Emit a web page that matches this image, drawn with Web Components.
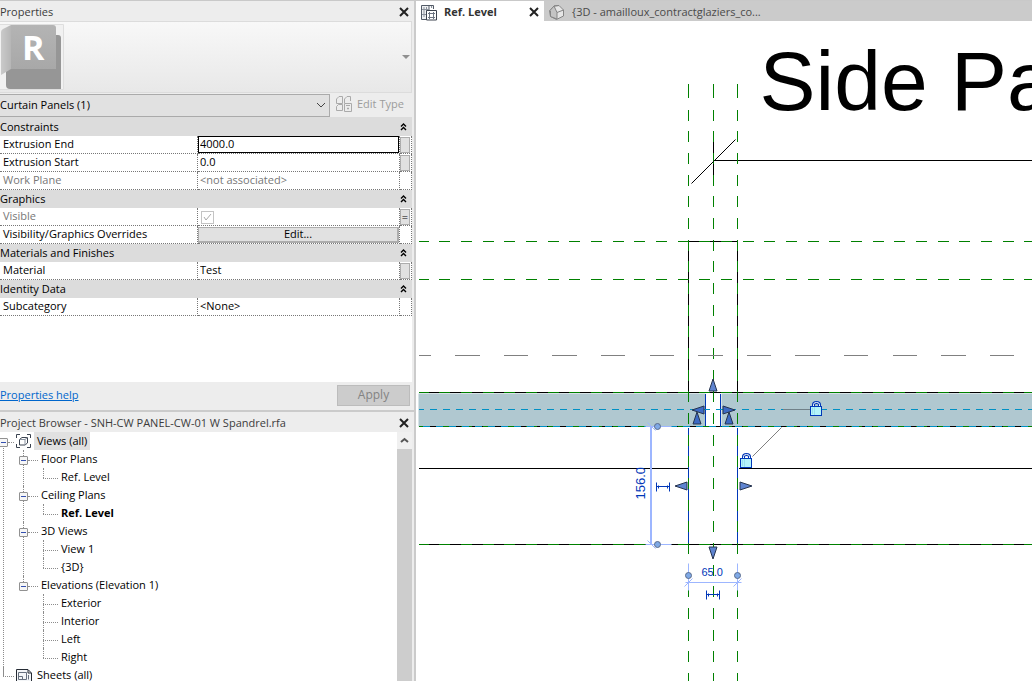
<!DOCTYPE html>
<html lang="en">
<head>
<meta charset="utf-8">
<title>Family editor</title>
<style>
  html, body { margin: 0; height: 100%; }
  body { overflow: hidden; font: 11px/18px "Open Sans", "Noto Sans", sans-serif; color: #000; background: #fff; }
</style>
</head>
<body>
<app-window>
  <dock-pane slot="properties" heading="Properties">
    <type-selector></type-selector>
    <instance-filter></instance-filter>
    <property-grid></property-grid>
    <panel-footer></panel-footer>
  </dock-pane>
  <dock-pane slot="browser" heading="Project Browser - SNH-CW PANEL-CW-01 W Spandrel.rfa">
    <scroll-area>
      <tree-item label="Views (all)" icon="views" open selected>
        <tree-item label="Floor Plans" open><tree-item label="Ref. Level"></tree-item></tree-item>
        <tree-item label="Ceiling Plans" open><tree-item label="Ref. Level" active></tree-item></tree-item>
        <tree-item label="3D Views" open>
          <tree-item label="View 1"></tree-item>
          <tree-item label="{3D}"></tree-item>
        </tree-item>
        <tree-item label="Elevations (Elevation 1)" open>
          <tree-item label="Exterior"></tree-item>
          <tree-item label="Interior"></tree-item>
          <tree-item label="Left"></tree-item>
          <tree-item label="Right"></tree-item>
        </tree-item>
      </tree-item>
      <tree-item label="Sheets (all)" icon="sheets"></tree-item>
    </scroll-area>
  </dock-pane>
  <view-tabs slot="tabs"></view-tabs>
  <drawing-view slot="view"></drawing-view>
</app-window>

<script>
const define = (name, html, setup) => {
  const template = document.createElement('template');
  template.innerHTML = html;
  customElements.define(name, class extends HTMLElement {
    constructor() {
      super();
      this.attachShadow({ mode: 'open' }).append(template.content.cloneNode(true));
    }
    connectedCallback() { if (setup) setup(this, this.shadowRoot); }
  });
};

define('app-window', `
<style>
  :host { display: grid; grid-template-columns: 416px minmax(0, 1fr); height: 100vh; box-sizing: border-box; border-top: 1px solid #c9c9c9; }
  aside { display: grid; grid-template-rows: 409px minmax(0, 1fr); border-right: 2px solid #cbcbcb; background: #ededed; min-height: 0; }
  main { display: grid; grid-template-rows: 20px minmax(0, 1fr); min-height: 0; }
  .lower { border-top: 2px solid #cbcbcb; min-height: 0; display: grid; }
</style>
<aside><slot name="properties"></slot><div class="lower"><slot name="browser"></slot></div></aside>
<main><slot name="tabs"></slot><slot name="view"></slot></main>`);

define('close-button', `
<style>
  :host { display: block; }
  button { display: block; width: 12px; height: 12px; padding: 0; border: 0; background: none; }
  svg { display: block; }
</style>
<button aria-label="Close"><svg width="12" height="12" viewBox="0 0 12 12"><path d="M2 2L10 10M10 2L2 10" stroke="#222" stroke-width="2"/></svg></button>`);

define('dock-pane', `
<style>
  :host { display: flex; flex-direction: column; min-height: 0; overflow: hidden; }
  header { display: flex; align-items: center; justify-content: space-between; box-sizing: border-box; height: 20px; flex: none; padding: 2px 4px 0 0; color: #3c3c3c; }
  h2 { margin: 0; font: inherit; white-space: nowrap; }
</style>
<header><h2></h2><close-button></close-button></header><slot></slot>`,
(host, root) => { root.querySelector('h2').textContent = host.getAttribute('heading'); });

define('type-selector', `
<style>
  :host { display: flex; align-items: center; justify-content: space-between; height: 70px; flex: none; margin-right: 2px; border: 1px solid #dcdcdc; border-left: 0; background: linear-gradient(#f8f8f8, #e8e8e8); }
  svg { display: block; }
</style>
<svg width="64" height="68" viewBox="0 1 64 68" role="img" aria-label="Revit family">
  <defs><linearGradient id="f" x2="0" y2="1"><stop offset="0" stop-color="#b4b4b4"/><stop offset="1" stop-color="#a8a8a8"/></linearGradient>
  <linearGradient id="s"><stop offset="0" stop-color="#cacaca"/><stop offset="1" stop-color="#b6b6b6"/></linearGradient></defs>
  <path d="M0 2.500H63.500V67.500H0" fill="#f1f1f1" stroke="#dedede"/>
  <path d="M6 13H58a3 3 0 0 1 3 3V67H10a4 4 0 0 1-4-4Z" fill="#969696"/>
  <path d="M11 3V47L1 53V10Q1 8 3 7Z" fill="url(#s)"/>
  <path d="M11 3H53a3 3 0 0 1 3 3V47H11Z" fill="url(#f)"/>
  <text x="22" y="38" font-family="Open Sans, sans-serif" font-weight="700" font-size="34" fill="#fff">R</text>
</svg>
<svg width="10" height="6" viewBox="0 0 10 6"><path d="M1 1H9L5 5Z" fill="#909090"/></svg>`);

define('instance-filter', `
<style>
  :host { display: flex; align-items: center; height: 24px; flex: none; gap: 6px; margin-right: 2px; }
  .box { position: relative; width: 330px; height: 23px; }
  select { appearance: none; display: block; box-sizing: border-box; width: 100%; height: 23px; margin: 0; padding: 0; border: 1px solid #aaa; border-left: 0; border-radius: 0; background: #e1e1e1; color: #000; font: inherit; }
  .box svg { position: absolute; right: 4px; top: 8px; pointer-events: none; }
  button { display: flex; align-items: center; gap: 5px; padding: 0 0 2px; border: 0; background: none; color: #9c9c9c; font: inherit; white-space: nowrap; }
</style>
<div class="box"><select aria-label="Category filter"><option>Curtain Panels (1)</option></select>
<svg width="10" height="7" viewBox="0 0 10 7"><path d="M1 1L5 5L9 1" fill="none" stroke="#444"/></svg></div>
<button disabled><svg width="16" height="16" viewBox="0 0 16 16" fill="none" stroke="#aaa">
<path d="M.5 3L3 .5H6.500V7.500H.5ZM14.500 5V.5H11L8.500 3V7M.5 10.500V14.500H6.500V8.500H2.500Z"/>
<path d="M8.500 7.500H15.500V15.500H8.500Z"/><path d="M10 9.500H14M11 12.500H13M12 11.500V13.500"/></svg>Edit Type</button>`);

const groups = [
  ['Constraints', [
    { name: 'Extrusion End', value: '4000.0', kind: 'text', focus: true, link: '' },
    { name: 'Extrusion Start', value: '0.0', kind: 'text', link: '' },
    { name: 'Work Plane', value: '<not associated>', kind: 'readonly' }]],
  ['Graphics', [
    { name: 'Visible', kind: 'check', link: '=' },
    { name: 'Visibility/Graphics Overrides', value: 'Edit...', kind: 'button' }]],
  ['Materials and Finishes', [{ name: 'Material', value: 'Test', kind: 'text', link: '' }]],
  ['Identity Data', [{ name: 'Subcategory', value: '<None>', kind: 'text' }]]
];

define('property-grid', `
<style>
  :host { display: block; flex: 1; min-height: 0; overflow: hidden; margin-right: 2px; background: #fff; border-top: 1px solid #dcdcdc; }
  table { width: 100%; table-layout: fixed; border-collapse: separate; border-spacing: 0; }
  col.name { width: 198px; } col.link { width: 12px; }
  tr { height: 18px; }
  th, td { box-sizing: border-box; height: 18px; padding: 0; text-align: left; font-weight: 400; line-height: 16px; white-space: nowrap; }
  .group th, .group td { background: #dcdcdc; }
  .group svg { display: block; }
  .prop th { padding: 0 0 2px 3px; line-height: 15px; border-bottom: 1px dotted #777; border-right: 1px dotted #777; }
  .prop td { border-bottom: 1px dotted #777; border-right: 1px dotted #777; }
  .muted, .muted input { color: #777; }
  input[type=text] { display: block; box-sizing: border-box; width: 100%; height: 17px; padding: 0 2px 2px; border: 0; background: none; color: inherit; font: inherit; line-height: 15px; outline: 0; }
  input[type=text].focus { padding: 0 1px 2px; border: 1px solid #000; line-height: 13px; }
  input[type=checkbox] { appearance: none; display: block; width: 13px; height: 13px; margin: 1px 0 0 3px; border: 1px solid #c4c4c4; box-sizing: border-box; background: no-repeat center/11px url("data:image/svg+xml,%3Csvg xmlns='http://www.w3.org/2000/svg' viewBox='0 0 11 11'%3E%3Cpath d='M2 5L4 8L9 2' fill='none' stroke='%23aaa'/%3E%3C/svg%3E"); }
  button { display: block; box-sizing: border-box; padding: 0; font: inherit; color: #000; background: #e1e1e1; border: 1px solid #adadad; }
  .edit { width: 100%; height: 16px; line-height: 12px; border-width: 1px 2px 2px 1px; }
  .assoc { width: 10px; height: 16px; line-height: 12px; }
</style>
<table aria-label="Instance properties"><colgroup><col class="name"><col><col class="link"></colgroup><tbody></tbody></table>`,
(host, root) => {
  const body = root.querySelector('tbody');
  const make = (tag, props = {}, ...kids) => { const n = Object.assign(document.createElement(tag), props); n.append(...kids); return n; };
  groups.forEach(([title, props], g) => {
    const row = make('tr', { className: 'group' });
    row.append(make('th', { colSpan: 2, scope: 'colgroup' }, make('span', {}, title)));
    const cell = make('td');
    cell.innerHTML = '<svg width="7" height="8" viewBox="0 0 7 8" fill="none" stroke="#000" stroke-width="1.4"><path d="M1 3.500L3.500 1L6 3.500M1 7L3.500 4.500L6 7"/></svg>';
    row.append(cell);
    body.append(row);
    props.forEach((p, i) => {
      const id = 'p' + g + i;
      const muted = p.kind === 'readonly' || p.kind === 'check';
      const tr = make('tr', { className: 'prop' + (muted ? ' muted' : '') });
      tr.append(make('th', { scope: 'row' }, make('label', { htmlFor: id }, p.name)));
      let control;
      if (p.kind === 'check') control = make('input', { type: 'checkbox', id, checked: true, disabled: true });
      else if (p.kind === 'button') control = make('button', { id, className: 'edit' }, p.value);
      else control = make('input', { type: 'text', id, value: p.value, readOnly: p.kind === 'readonly', className: p.focus ? 'focus' : '' });
      tr.append(make('td', {}, control));
      const link = make('td');
      if (p.link !== undefined) link.append(make('button', { className: 'assoc', ariaLabel: 'Associate family parameter' }, p.link));
      tr.append(link);
      body.append(tr);
    });
  });
});

define('panel-footer', `
<style>
  :host { display: flex; align-items: center; justify-content: space-between; box-sizing: border-box; height: 28px; flex: none; padding: 0 4px 2px 0; }
  a { color: #0066cc; }
  button { width: 73px; height: 21px; padding: 0; border: 1px solid #bcbcbc; background: #ccc; color: #838383; font: inherit; font-size: 12px; line-height: 18px; }
</style>
<a href="#help">Properties help</a><button disabled>Apply</button>`);

define('scroll-area', `
<style>
  :host { display: grid; grid-template-columns: minmax(0, 1fr) 15px; flex: 1; min-height: 0; margin-right: 2px; background: #fff; }
  .content { overflow: hidden; min-height: 0; }
  .bar { display: grid; grid-template-rows: 17px 1fr; background: #f0f0f0; }
  button { display: grid; place-items: center; padding: 0; border: 0; background: none; }
  .thumb { background: #cdcdcd; }
</style>
<div class="content"><slot></slot></div>
<div class="bar"><button aria-label="Scroll up"><svg width="9" height="7" viewBox="0 0 9 7"><path d="M1 5L4.500 2L8 5" fill="none" stroke="#555" stroke-width="2"/></svg></button><div class="thumb"></div></div>`);

const treeIcons = {
  views: '<svg width="15" height="15" viewBox="0 0 15 15" fill="none" stroke="#3b4350"><path d="M4 .5H.5V4M11 .5H14.500V4M.5 10V13.500H4M14.500 10V13.500H11"/><path d="M3.500 5.500L6 3.500H11.500V9L9 11H3.500Z" fill="#fff"/><path d="M3.500 5.500H9V11M9 5.500L11.500 3.500" stroke="#8a93a0"/></svg>',
  sheets: '<svg width="16" height="13" viewBox="0 0 16 13"><path d="M.5 .5H12L15.500 4V12.500H.5Z" fill="#f4f6f8" stroke="#252b34"/><path d="M12 1V4H15" fill="none" stroke="#252b34"/><path d="M2.500 3.500H10.500V10.500H2.500ZM2.500 7.500H6.500V10.500M12.500 6V10.500" fill="none" stroke="#66707e"/></svg>'
};
define('tree-item', `
<style>
  :host { display: block; position: relative; }
  :host::before { content: ""; position: absolute; left: 4px; top: 0; height: 100%; border-left: 1px dotted #8c8c8c; }
  :host(:last-of-type)::before { height: 10px; }
  :host([selected])::before { top: 9px; }
  .row { position: relative; display: flex; align-items: center; height: 18px; white-space: nowrap; }
  .guide { width: 22px; flex: none; display: flex; align-items: center; padding-top: 2px; }
  .guide::after { content: ""; flex: 1; margin-right: 3px; border-top: 1px dotted #8c8c8c; }
  :host(:not([open])) .guide::after { margin-left: 4px; }
  :host([icon]) .guide { width: 17px; }
  :host([icon]) .guide::after { margin-right: 2px; }
  button { width: 9px; height: 9px; padding: 0; display: grid; place-items: center; border: 1px solid #919191; border-radius: 1px; background: #f6f6f6; }
  button::after { content: ""; width: 5px; height: 1px; background: #3450b0; }
  :host(:not([open])) button { display: none; }
  .icon svg { display: block; }
  .icon { width: 18px; flex: none; }
  :host(:not([icon])) .icon { display: none; }
  .label { line-height: 18px; }
  :host([icon]) .label { padding: 0 3px; }
  :host([selected]) .label { background: #e1e1e1; }
  :host([active]) .label { font-weight: 700; }
  .kids { margin-left: 20px; }
  :host([icon]) { margin-left: -1px; }
</style>
<div class="row"><span class="guide"><button aria-label="Collapse"></button></span><span class="icon"></span><span class="label"></span></div>
<div class="kids"><slot></slot></div>`,
(host, root) => {
  root.querySelector('.label').textContent = host.getAttribute('label');
  root.querySelector('.icon').innerHTML = treeIcons[host.getAttribute('icon')] || '';
});

define('view-tabs', `
<style>
  :host { display: flex; background: #cbcbcb; color: #4a4a4a; }
  .tab { display: flex; align-items: center; gap: 7px; box-sizing: border-box; padding-top: 2px; white-space: nowrap; }
  .active { width: 128px; padding: 2px 4px 0; background: #fff; color: #333; font-weight: 700; }
  .active span { flex: 1; }
  .other { padding-left: 5px; gap: 8px; }
  svg { display: block; }
</style>
<div class="tab active"><svg width="17" height="17" viewBox="0 0 17 17"><path d="M1.500 1.500H9V15.500H1.500ZM9 1.500H13.500V5" fill="#eef0f2" stroke="#525a66"/><path d="M4 3V13M6.500 3V13M2 5.500H9M2 10.500H9M11.500 2V4" stroke="#8b929c"/><path d="M6.500 6.500H16.500V16H6.500Z" fill="#fff" stroke="#3c434e"/><path d="M9.500 8V15M13.500 8V15M8 9.500H15M8 13.500H15" stroke="#6c7480"/></svg><span>Ref. Level</span><close-button></close-button></div>
<div class="tab other"><svg width="15" height="15" viewBox="0 0 15 15" stroke="#858585"><path d="M.5 6L5 1L10 .5L14.500 5V11L7.500 14.500L1.500 11.500Z" fill="#e6e6e6"/><path d="M.5 6L5 1L8 7.500V14L1.500 11.500V6" fill="#c4c4c4"/><path d="M8 7.500L14.500 5M5 1L10 .5" fill="none"/></svg><span>{3D - amailloux_contractglaziers_co...</span></div>`);

define('drawing-view', `
<style>
  :host { display: block; min-height: 0; overflow: hidden; background: #fff; }
  svg { display: block; width: 100%; height: 100%; font-family: "Liberation Sans", Arial, sans-serif; }
  .ref { stroke: #008000; stroke-dasharray: 11 10.67; }
  .ink { stroke: #000; } .sel { stroke: #0037b8; } .cl { stroke: #0090c4; stroke-dasharray: 7 6; }
  .dim { stroke: #9db6ff; fill: none; }
  .grip { fill: #7fa9e6; stroke: #5a6b8c; }
  .arrow { fill: #3d6ac4; stroke: #26344f; }
  .arrow .outer { fill: #5f84d0; }
  .flip { stroke: #0037b8; fill: none; }
  .crisp { shape-rendering: crispEdges; fill: none; }
</style>
<svg role="img" aria-label="Ref. Level floor plan">
 <defs>
  <clipPath id="clip"><rect x="630" y="467" width="20" height="40"/></clipPath>
  <g id="lock"><path d="M3 5V3Q3 1 6 1T9 3V5" fill="none" stroke="#0037b8" stroke-width="3"/><path d="M3 5V3Q3 1 6 1T9 3V5" fill="none" stroke="#fff"/><rect x="0" y="5" width="11" height="9" fill="#b4f4fa" stroke="#0037b8"/><path d="M2 7V13M4 6V13" stroke="#7fcfe0" stroke-dasharray="1 1"/></g>
  <g id="flip"><path d="M0 0V9M13 0V9M0 4H13M2 3V6M11 3V6"/></g>
 </defs>
 <g transform="translate(-415.5 -20.5)">
  <path d="M418 393H705V426H418ZM721 393H2400V426H721Z" fill="#b0c8d0"/>
  <g class="crisp">
   <path class="ink" d="M688 241V392M737 241V392M688 241H737M418 392H2400M418 426H2400M418 544H2400M418 468H688M738 468H2400M713 160H2400M713 131V183"/>
   <path class="sel" d="M688 427V544M737 427V544M705 393V426M720 393V426"/>
   <path class="ref" d="M688 109V2000M713 109V2000M737 109V2000"/>
   <path class="ref" stroke-dashoffset="1" d="M418 241H2400M418 279H2400M418 392H2400M418 426H2400M418 544H2400"/>
   <path stroke="#008000" d="M688 83V97M713 83V97M737 83V97"/>
   <path d="M418 355H2400" stroke="#808080" stroke-dasharray="24.500 24.100" stroke-dashoffset="12"/>
   <path class="cl" stroke-dashoffset="2" d="M418 409H2400"/>
   <path class="cl" d="M422 426H2400"/>
   <path d="M782 409H810" stroke="#708088"/>
  </g>
  <path d="M691 183L735 139" stroke="#000"/>
  <path d="M752 456L781 427" stroke="#808080"/>
  <text x="759" y="109" font-size="84">Side Pa</text>
  <path class="dim" d="M650.500 426V544" stroke-width="2"/>
  <path class="dim" d="M645 426H671M645 544H671M647 422L655 430M647 540L655 548M685 582H741M684 586L692 578M733 586L741 578M688 563V590M737 563V590"/>
  <g class="grip"><circle cx="657" cy="426" r="3"/><circle cx="657" cy="544" r="3"/><circle cx="688" cy="575" r="3"/><circle cx="737" cy="575" r="3"/></g>
  <g clip-path="url(#clip)"><text transform="translate(644 499) rotate(-90)" font-size="13" fill="#0037b8">156.0</text></g>
  <text x="701" y="575" font-size="11" fill="#0037b8">65.0</text>
  <g class="arrow" transform="translate(-.5 -.5)"><path class="outer" d="M713 379L717 391H709ZM713 559L709 547H717ZM675 486L687 482V490ZM752 486L740 482V490Z"/><path d="M692 410L704 406V414ZM735 410L723 406V414ZM697 412L701 424H693ZM729 412L733 424H725Z"/></g>
  <g class="flip"><use href="#flip" x="656" y="482"/><use href="#flip" x="706" y="590"/></g>
  <use href="#lock" x="810" y="401"/><use href="#lock" x="740" y="453"/>
 </g>
</svg>`);
</script>
</body>
</html>
